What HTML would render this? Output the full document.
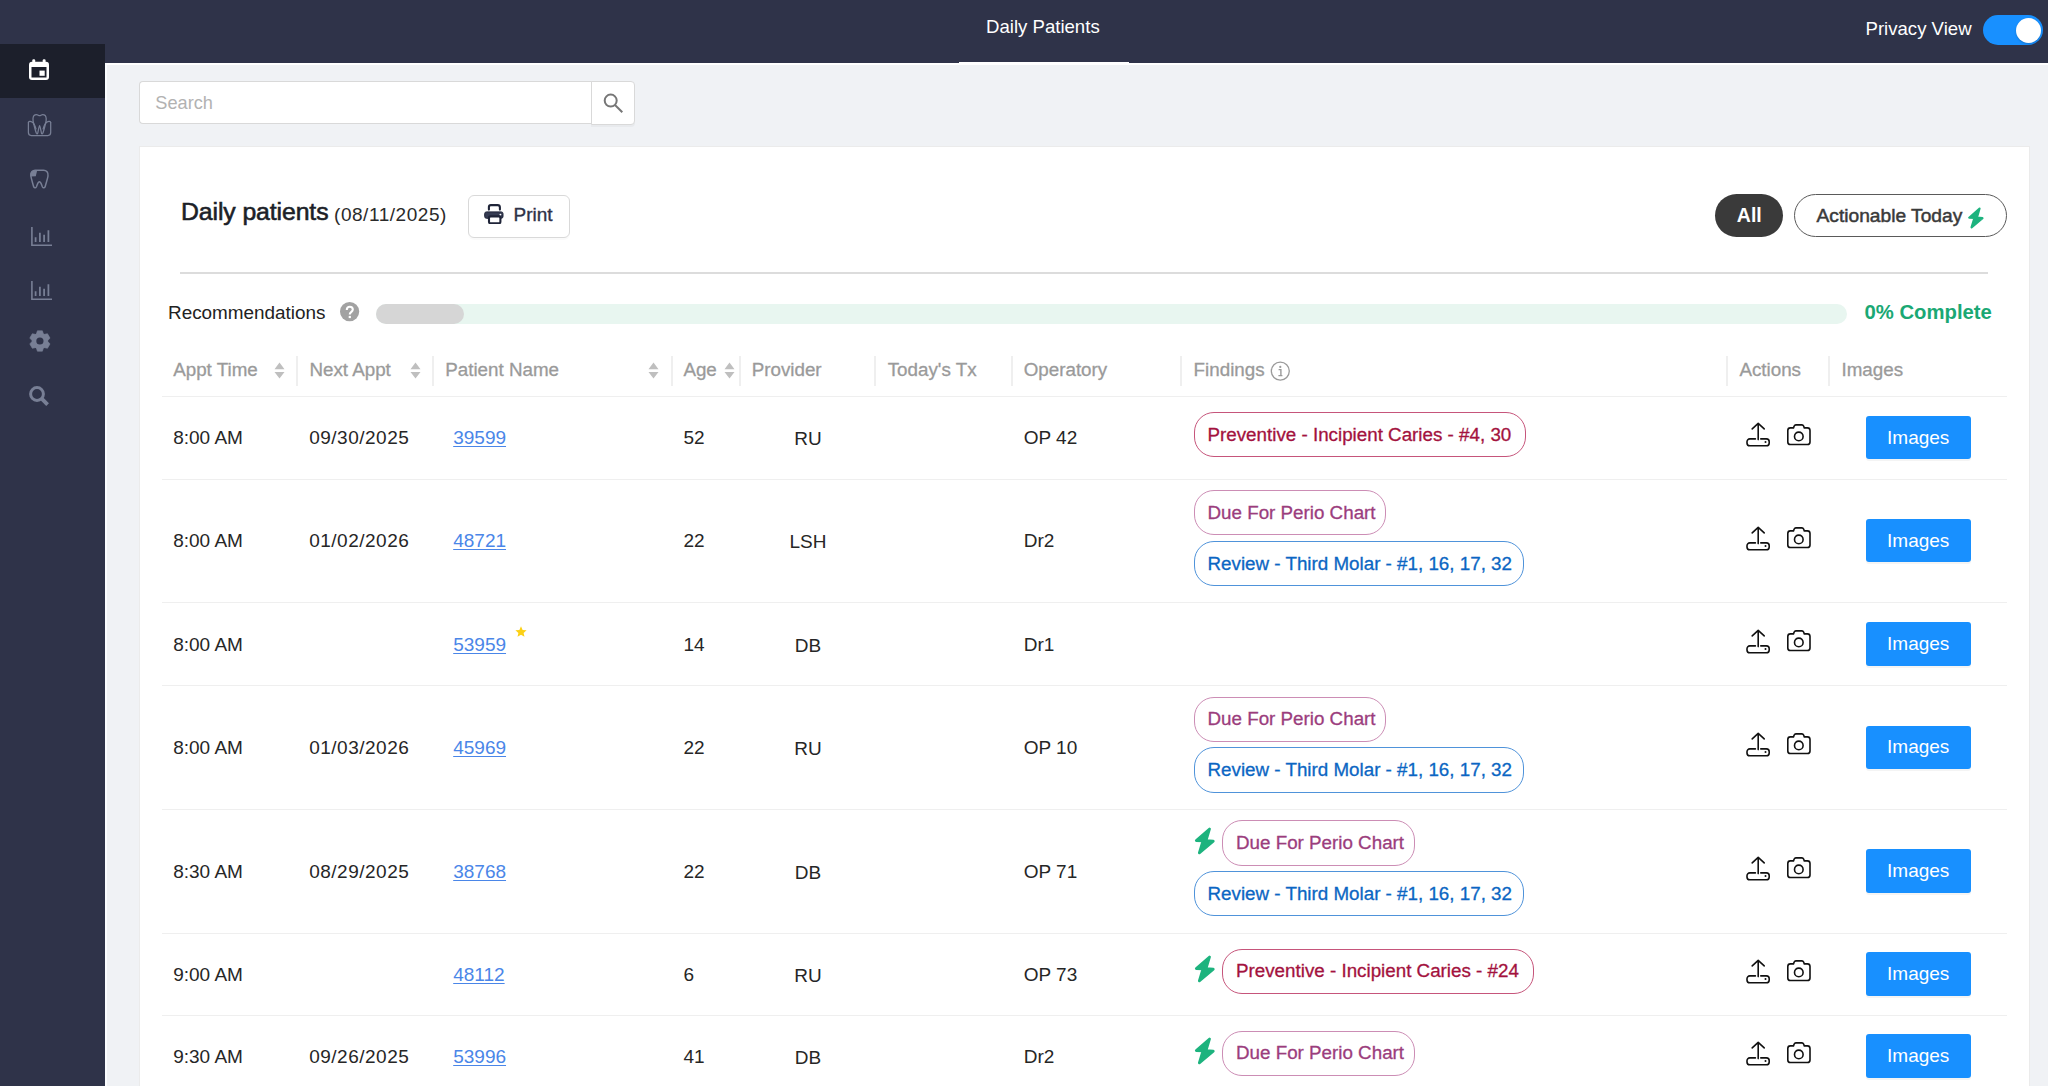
<!DOCTYPE html><html><head><meta charset="utf-8"><style>
html,body{margin:0;padding:0;}
body{width:2048px;height:1086px;overflow:hidden;position:relative;background:#f0f2f5;font-family:"Liberation Sans", sans-serif;}
.a{position:absolute;}
.t{position:absolute;white-space:nowrap;line-height:1;}
.m{-webkit-text-stroke:0.35px currentColor;}
</style></head><body>
<div class="a" style="left:0px;top:0px;width:2048px;height:63px;background:#2f3349"></div>
<div class="a" style="left:0px;top:63px;width:105px;height:1023px;background:#2f3349"></div>
<div class="a" style="left:105px;top:63px;width:1943px;height:1.5px;background:#fff"></div>
<div class="a" style="left:105px;top:63px;width:2px;height:1023px;background:#fbfdff"></div>
<div class="a" style="left:0px;top:44px;width:105px;height:54px;background:#1c1f2b"></div>
<div class="a" style="left:958.5px;top:62px;width:170px;height:3px;background:#fff"></div>
<div class="t " style="left:986.0px;top:18.46px;font-size:18.6px;color:#fff;font-weight:400;">Daily Patients</div>
<div class="t " style="left:1865.5px;top:19.86px;font-size:18.6px;color:#fff;font-weight:400;">Privacy View</div>
<div class="a" style="left:1983px;top:15px;width:60px;height:30px;border-radius:15px;background:#1890ff"></div>
<div class="a" style="left:2015.5px;top:17.8px;width:25px;height:25px;border-radius:50%;background:#fff;box-shadow:0 1px 2px rgba(0,0,0,0.2)"></div>
<svg class="a" style="left:29px;top:59px" width="20" height="21" viewBox="0 0 20 21"><rect x="0" y="2.8" width="20" height="18.2" rx="3" fill="#fff"/>
<rect x="2.5" y="8" width="15" height="10.5" fill="#1c1f2b"/>
<rect x="10.5" y="11.6" width="5.2" height="5.2" fill="#fff"/>
<rect x="3.3" y="0.3" width="2.9" height="4" rx="1.2" fill="#fff"/>
<rect x="13.7" y="0.3" width="2.9" height="4" rx="1.2" fill="#fff"/></svg>
<svg class="a" style="left:27px;top:113px" width="25" height="24" viewBox="27 113 25 24"><g fill="none" stroke="#787f95" stroke-width="1.25" stroke-linejoin="round" stroke-linecap="round">
<path d="M33.8 124 C33 122 32.9 120.5 33 118.5 C33.2 116 34.8 114.7 36.5 114.7 C37.8 114.7 38.6 115.7 39.6 115.7 C40.6 115.7 41.4 114.7 42.7 114.7 C44.4 114.7 46 116 46.2 118.5 C46.3 120.5 46.2 122 45.4 124"/>
<path d="M33.8 124 C34.5 127 35.5 131 36.4 133.3 C36.8 134 37.4 134 37.7 133.3 C38.3 131 38.8 126.5 39.6 125.6 C40.4 126.5 40.9 131 41.5 133.3 C41.8 134 42.4 134 42.8 133.3 C43.7 131 44.7 127 45.4 124"/>
<path d="M28.4 122.6 C28.6 121.2 30.4 120.8 32 121.9 C34 123.3 35.3 126 36 129 M50.7 122.6 C50.5 121.2 48.7 120.8 47.1 121.9 C45.1 123.3 43.8 126 43.1 129"/>
<path d="M28.4 122.6 V132.6 C28.4 134.3 29.6 135.5 31.3 135.5 H47.8 C49.5 135.5 50.7 134.3 50.7 132.6 V122.6"/>
</g></svg>
<svg class="a" style="left:29px;top:169px" width="21" height="21" viewBox="0 0 21 21"><g fill="none" stroke="#787f95" stroke-width="1.5" stroke-linejoin="round">
<path d="M1.8 6.5 C1.3 3 3.8 1 6.5 1.2 L14.5 1.2 C17.5 1.2 19.5 3.5 19 7 C18.6 10 17.2 13.5 16.2 17.5 C15.8 19 14.2 19.3 13.5 18 C12.5 16 12 12.8 10.4 12.8 C8.8 12.8 8.3 16 7.3 18 C6.6 19.3 5 19 4.6 17.5 C3.6 13.5 2.2 10 1.8 6.5 Z"/>
</g><path d="M1.5 7.5 C1 3.5 3.5 1 6.5 1 L8.2 1.3 L6.8 7.3 Z" fill="#787f95"/></svg>
<svg class="a" style="left:30.5px;top:227px" width="22" height="20" viewBox="0 0 22 20"><g stroke="#787f95" fill="none"><path d="M0.9 0 V18.3 H21" stroke-width="1.6"/>
<path d="M4.6 10.2 V15.0 M8.9 5.7 V15.0 M13.1 7.7 V15.0 M17.4 3.2 V15.0" stroke-width="1.75"/></g></svg>
<svg class="a" style="left:30.5px;top:281px" width="22" height="20" viewBox="0 0 22 20"><g stroke="#787f95" fill="none"><path d="M0.9 0 V18.3 H21" stroke-width="1.6"/>
<path d="M4.6 10.2 V15.0 M8.9 5.7 V15.0 M13.1 7.7 V15.0 M17.4 3.2 V15.0" stroke-width="1.75"/></g></svg>
<svg class="a" style="left:28.7px;top:330.2px" width="22" height="22" viewBox="0 0 22 22"><g fill="#787f95"><circle cx="10.9" cy="11" r="8.0"/><path d="M8.4 0.8 H13.4 L14.7 4.8 H7.1 Z" transform="rotate(0 10.9 11)" stroke="#787f95" stroke-width="0.6" stroke-linejoin="round"/><path d="M8.4 0.8 H13.4 L14.7 4.8 H7.1 Z" transform="rotate(60 10.9 11)" stroke="#787f95" stroke-width="0.6" stroke-linejoin="round"/><path d="M8.4 0.8 H13.4 L14.7 4.8 H7.1 Z" transform="rotate(120 10.9 11)" stroke="#787f95" stroke-width="0.6" stroke-linejoin="round"/><path d="M8.4 0.8 H13.4 L14.7 4.8 H7.1 Z" transform="rotate(180 10.9 11)" stroke="#787f95" stroke-width="0.6" stroke-linejoin="round"/><path d="M8.4 0.8 H13.4 L14.7 4.8 H7.1 Z" transform="rotate(240 10.9 11)" stroke="#787f95" stroke-width="0.6" stroke-linejoin="round"/><path d="M8.4 0.8 H13.4 L14.7 4.8 H7.1 Z" transform="rotate(300 10.9 11)" stroke="#787f95" stroke-width="0.6" stroke-linejoin="round"/></g><circle cx="10.9" cy="11" r="3.6" fill="#2f3349"/></svg>
<svg class="a" style="left:28px;top:385px" width="22" height="22" viewBox="0 0 22 22"><g stroke="#787f95" fill="none" stroke-width="3"><circle cx="9" cy="9" r="6.4"/><path d="M13.2 13.2 L19.6 19.6" stroke-width="3.8"/></g></svg>
<div class="a" style="left:139px;top:81px;width:453px;height:43px;box-sizing:border-box;border:1px solid #d9d9d9;border-right:none;border-radius:4px 0 0 4px;background:#fff"></div>
<div class="t " style="left:155.3px;top:94.19px;font-size:18.2px;color:#b2b2b2;font-weight:400;">Search</div>
<div class="a" style="left:591px;top:81px;width:44px;height:44px;box-sizing:border-box;border:1px solid #d9d9d9;border-radius:0 4px 4px 0;background:#fff;box-shadow:0 2px 0 rgba(0,0,0,0.03)"></div>
<svg class="a" style="left:601px;top:91px" width="24" height="24" viewBox="0 0 24 24"><g stroke="#767676" fill="none" stroke-width="2"><circle cx="9.7" cy="9.6" r="6"/><path d="M14 14 L21.3 21.3"/></g></svg>
<div class="a" style="left:139px;top:146px;width:1891px;height:950px;background:#fff;box-sizing:border-box;border:1px solid #ebebeb"></div>
<div class="t m" style="left:181.0px;top:200.41px;font-size:24.8px;color:#1c1f28;font-weight:400;letter-spacing:-0.1px;-webkit-text-stroke:0.6px #1c1f28">Daily patients</div>
<div class="t " style="left:334.0px;top:204.92px;font-size:19px;color:#2a2a2a;font-weight:400;letter-spacing:0.55px">(08/11/2025)</div>
<div class="a" style="left:468px;top:194.5px;width:101.5px;height:43px;box-sizing:border-box;border:1px solid #d9d9d9;border-radius:6px;background:#fff;box-shadow:0 2px 0 rgba(0,0,0,0.02)"></div>
<svg class="a" style="left:483px;top:204px" width="21" height="20" viewBox="0 0 21 20"><path d="M5.9 5.6 V3.1 C5.9 2.0 6.8 1.1 7.9 1.1 H14.6 C15.9 1.1 16.9 2.1 16.9 3.4 V5.6" fill="none" stroke="#1f2438" stroke-width="2.1" stroke-linecap="round"/>
<rect x="1.7" y="7.9" width="18.3" height="6.4" rx="1.8" fill="#353b52" stroke="#1f2438" stroke-width="1"/>
<circle cx="17.4" cy="10.6" r="0.95" fill="#fff"/>
<rect x="6" y="12.4" width="11.4" height="6.9" rx="1.6" fill="#fff" stroke="#1f2438" stroke-width="2.1"/></svg>
<div class="t m" style="left:513.5px;top:205.32px;font-size:19px;color:#2e3248;font-weight:400;">Print</div>
<div class="a" style="left:1715.3px;top:194.4px;width:68px;height:43px;border-radius:22px;background:#3a3a3a"></div>
<div class="t " style="left:1449.3px;width:600px;text-align:center;top:205.99px;font-size:19.5px;color:#fff;font-weight:700;">All</div>
<div class="a" style="left:1794.3px;top:194.4px;width:212.4px;height:43px;box-sizing:border-box;border-radius:22px;border:1px solid #5a5a5a;background:#fff"></div>
<div class="t m" style="left:1816.5px;top:206.25px;font-size:19.2px;color:#3a3a3a;font-weight:400;-webkit-text-stroke:0.5px #3a3a3a">Actionable Today</div>
<svg class="a" style="left:1966.5px;top:206.5px" width="18" height="22" viewBox="0 0 21 27"><path d="M14.9 1.9 L2.1 13.1 L8.5 13.5 L5.0 25.0 L18.5 13.6 L11.6 13.0 Z" fill="#1db37e" stroke="#1db37e" stroke-width="2.6" stroke-linejoin="round"/></svg>
<div class="a" style="left:180px;top:272px;width:1808px;height:2px;background:#dcdcdc"></div>
<div class="t " style="left:168.0px;top:303.90px;font-size:18.9px;color:#222;font-weight:400;">Recommendations</div>
<svg class="a" style="left:340px;top:302px" width="20" height="20" viewBox="0 0 20 20"><circle cx="9.6" cy="9.6" r="9.6" fill="#a2a2a2"/><path d="M6.8 7.9 C6.8 5.9 8.1 4.8 9.8 4.8 C11.6 4.8 12.8 6.0 12.8 7.6 C12.8 9.2 11.5 9.8 10.6 10.6 C10.0 11.1 9.8 11.6 9.8 12.6" fill="none" stroke="#fff" stroke-width="2.1"/><rect x="8.7" y="13.9" width="2.2" height="2.2" fill="#fff"/></svg>
<div class="a" style="left:375.8px;top:304px;width:1471px;height:20px;border-radius:10px;background:#e8f6f0"></div>
<div class="a" style="left:375.8px;top:304px;width:88px;height:20px;border-radius:10px;background:#d6d6d6"></div>
<div class="t " style="left:1864.5px;top:301.62px;font-size:20.3px;color:#1aa874;font-weight:700;">0% Complete</div>
<div class="t m" style="left:173.2px;top:360.59px;font-size:18.8px;color:#9a9a9a;font-weight:400;-webkit-text-stroke:0.3px #9a9a9a">Appt Time</div>
<div class="t m" style="left:309.4px;top:360.59px;font-size:18.8px;color:#9a9a9a;font-weight:400;-webkit-text-stroke:0.3px #9a9a9a">Next Appt</div>
<div class="t m" style="left:445.2px;top:360.59px;font-size:18.8px;color:#9a9a9a;font-weight:400;-webkit-text-stroke:0.3px #9a9a9a">Patient Name</div>
<div class="t m" style="left:683.4px;top:360.59px;font-size:18.8px;color:#9a9a9a;font-weight:400;-webkit-text-stroke:0.3px #9a9a9a">Age</div>
<div class="t m" style="left:751.7px;top:360.59px;font-size:18.8px;color:#9a9a9a;font-weight:400;-webkit-text-stroke:0.3px #9a9a9a">Provider</div>
<div class="t m" style="left:887.7px;top:360.59px;font-size:18.8px;color:#9a9a9a;font-weight:400;-webkit-text-stroke:0.3px #9a9a9a">Today's Tx</div>
<div class="t m" style="left:1023.7px;top:360.59px;font-size:18.8px;color:#9a9a9a;font-weight:400;-webkit-text-stroke:0.3px #9a9a9a">Operatory</div>
<div class="t m" style="left:1193.6px;top:360.59px;font-size:18.8px;color:#9a9a9a;font-weight:400;-webkit-text-stroke:0.3px #9a9a9a">Findings</div>
<div class="t m" style="left:1739.4px;top:360.59px;font-size:18.8px;color:#9a9a9a;font-weight:400;-webkit-text-stroke:0.3px #9a9a9a">Actions</div>
<div class="t m" style="left:1841.5px;top:360.59px;font-size:18.8px;color:#9a9a9a;font-weight:400;-webkit-text-stroke:0.3px #9a9a9a">Images</div>
<svg class="a" style="left:273.5px;top:362px" width="11" height="17" viewBox="0 0 11 17"><path d="M5.5 0.6 L10.5 7.2 L0.5 7.2 Z M0.5 9.9 L10.5 9.9 L5.5 16.6 Z" fill="#bfbfbf"/></svg>
<svg class="a" style="left:410px;top:362px" width="11" height="17" viewBox="0 0 11 17"><path d="M5.5 0.6 L10.5 7.2 L0.5 7.2 Z M0.5 9.9 L10.5 9.9 L5.5 16.6 Z" fill="#bfbfbf"/></svg>
<svg class="a" style="left:648px;top:362px" width="11" height="17" viewBox="0 0 11 17"><path d="M5.5 0.6 L10.5 7.2 L0.5 7.2 Z M0.5 9.9 L10.5 9.9 L5.5 16.6 Z" fill="#bfbfbf"/></svg>
<svg class="a" style="left:724px;top:362px" width="11" height="17" viewBox="0 0 11 17"><path d="M5.5 0.6 L10.5 7.2 L0.5 7.2 Z M0.5 9.9 L10.5 9.9 L5.5 16.6 Z" fill="#bfbfbf"/></svg>
<div class="a" style="left:296.0px;top:355.5px;width:2px;height:30.5px;background:#efefef"></div>
<div class="a" style="left:432.2px;top:355.5px;width:2px;height:30.5px;background:#efefef"></div>
<div class="a" style="left:670.7px;top:355.5px;width:2px;height:30.5px;background:#efefef"></div>
<div class="a" style="left:738.7px;top:355.5px;width:2px;height:30.5px;background:#efefef"></div>
<div class="a" style="left:874.4px;top:355.5px;width:2px;height:30.5px;background:#efefef"></div>
<div class="a" style="left:1010.6px;top:355.5px;width:2px;height:30.5px;background:#efefef"></div>
<div class="a" style="left:1180.4px;top:355.5px;width:2px;height:30.5px;background:#efefef"></div>
<div class="a" style="left:1726.2px;top:355.5px;width:2px;height:30.5px;background:#efefef"></div>
<div class="a" style="left:1828.1px;top:355.5px;width:2px;height:30.5px;background:#efefef"></div>
<svg class="a" style="left:1270px;top:360.5px" width="21" height="21" viewBox="0 0 21 21"><circle cx="10.3" cy="10.1" r="9" fill="none" stroke="#9a9a9a" stroke-width="1.3"/><circle cx="10.3" cy="5.9" r="1.1" fill="#9a9a9a"/><path d="M8.6 8.6 H10.9 V14.4 M8.4 14.6 H12.4" stroke="#9a9a9a" stroke-width="1.4" fill="none"/></svg>
<div class="a" style="left:162px;top:396px;width:1845px;height:1px;background:#efefef"></div>
<div class="t " style="left:173.2px;top:428.02px;font-size:19px;color:#262626;font-weight:400;">8:00 AM</div>
<div class="t " style="left:309.2px;top:428.02px;font-size:19px;color:#262626;font-weight:400;letter-spacing:0.5px">09/30/2025</div>
<div class="t " style="left:453.2px;top:428.02px;font-size:19px;color:#4a86e8;font-weight:400;text-decoration:underline;text-underline-offset:2px;text-decoration-thickness:1.3px">39599</div>
<div class="t " style="left:683.4px;top:428.02px;font-size:19px;color:#262626;font-weight:400;">52</div>
<div class="t " style="left:508.0px;width:600px;text-align:center;top:429.02px;font-size:19px;color:#262626;font-weight:400;">RU</div>
<div class="t " style="left:1023.7px;top:428.02px;font-size:19px;color:#262626;font-weight:400;">OP 42</div>
<div class="a" style="left:1193.5px;top:411.9px;width:332.5px;height:45.4px;box-sizing:border-box;border:1.2px solid #c6557b;border-radius:20px"></div>
<div class="t m" style="left:1207.5px;top:425.59px;font-size:18.8px;color:#a3123e;font-weight:400;-webkit-text-stroke:0.3px #a3123e">Preventive - Incipient Caries - #4, 30</div>
<svg class="a" style="left:1746px;top:422.3px" width="25" height="25" viewBox="0 0 25 25"><g fill="none" stroke="#111" stroke-width="1.6" stroke-linecap="round" stroke-linejoin="round">
<path d="M9.4 16.9 H3.8 C2.2 16.9 1.0 18.1 1.0 19.7 V20.9 C1.0 22.5 2.2 23.7 3.8 23.7 H20.4 C22.0 23.7 23.2 22.5 23.2 20.9 V19.7 C23.2 18.1 22.0 16.9 20.4 16.9 H14.8"/>
<path d="M12.2 1.3 V17.6 M6.2 6.9 L12.2 1.3 L18.2 6.9"/></g><circle cx="19.5" cy="20.1" r="1" fill="#111"/></svg>
<svg class="a" style="left:1787px;top:423.7px" width="24" height="22" viewBox="0 0 24 22"><g fill="none" stroke="#111" stroke-width="1.6" stroke-linejoin="round">
<path d="M0.8 6.5 C0.8 5.0 1.9 3.9 3.4 3.9 H6.5 L7.2 2.0 C7.5 1.3 8.1 0.9 8.9 0.9 H14.9 C15.7 0.9 16.3 1.3 16.6 2.0 L17.3 3.9 H20.4 C21.9 3.9 23.0 5.0 23.0 6.5 V17.9 C23.0 19.4 21.9 20.5 20.4 20.5 H3.4 C1.9 20.5 0.8 19.4 0.8 17.9 Z"/>
<circle cx="11.8" cy="12.4" r="4.3"/></g></svg>
<div class="a" style="left:1865.7px;top:415.7px;width:105px;height:43.4px;border-radius:3px;background:#1890ff;box-shadow:0 2px 0 rgba(0,0,0,0.045)"></div>
<div class="t " style="left:1618.2px;width:600px;text-align:center;top:427.72px;font-size:19px;color:#fff;font-weight:400;">Images</div>
<div class="a" style="left:162px;top:478.5px;width:1845px;height:1px;background:#efefef"></div>
<div class="t " style="left:173.2px;top:531.37px;font-size:19px;color:#262626;font-weight:400;">8:00 AM</div>
<div class="t " style="left:309.2px;top:531.37px;font-size:19px;color:#262626;font-weight:400;letter-spacing:0.5px">01/02/2026</div>
<div class="t " style="left:453.2px;top:531.37px;font-size:19px;color:#4a86e8;font-weight:400;text-decoration:underline;text-underline-offset:2px;text-decoration-thickness:1.3px">48721</div>
<div class="t " style="left:683.4px;top:531.37px;font-size:19px;color:#262626;font-weight:400;">22</div>
<div class="t " style="left:508.0px;width:600px;text-align:center;top:532.37px;font-size:19px;color:#262626;font-weight:400;">LSH</div>
<div class="t " style="left:1023.7px;top:531.37px;font-size:19px;color:#262626;font-weight:400;">Dr2</div>
<div class="a" style="left:1193.5px;top:490.1px;width:192.7px;height:45.4px;box-sizing:border-box;border:1.2px solid #cc8db5;border-radius:20px"></div>
<div class="t m" style="left:1207.5px;top:503.74px;font-size:18.8px;color:#9b3d7d;font-weight:400;-webkit-text-stroke:0.3px #9b3d7d">Due For Perio Chart</div>
<div class="a" style="left:1193.5px;top:541.0px;width:330.2px;height:45.4px;box-sizing:border-box;border:1.2px solid #4f93da;border-radius:20px"></div>
<div class="t m" style="left:1207.5px;top:554.64px;font-size:18.8px;color:#0b66c3;font-weight:400;-webkit-text-stroke:0.3px #0b66c3">Review - Third Molar - #1, 16, 17, 32</div>
<svg class="a" style="left:1746px;top:525.65px" width="25" height="25" viewBox="0 0 25 25"><g fill="none" stroke="#111" stroke-width="1.6" stroke-linecap="round" stroke-linejoin="round">
<path d="M9.4 16.9 H3.8 C2.2 16.9 1.0 18.1 1.0 19.7 V20.9 C1.0 22.5 2.2 23.7 3.8 23.7 H20.4 C22.0 23.7 23.2 22.5 23.2 20.9 V19.7 C23.2 18.1 22.0 16.9 20.4 16.9 H14.8"/>
<path d="M12.2 1.3 V17.6 M6.2 6.9 L12.2 1.3 L18.2 6.9"/></g><circle cx="19.5" cy="20.1" r="1" fill="#111"/></svg>
<svg class="a" style="left:1787px;top:527.0500000000001px" width="24" height="22" viewBox="0 0 24 22"><g fill="none" stroke="#111" stroke-width="1.6" stroke-linejoin="round">
<path d="M0.8 6.5 C0.8 5.0 1.9 3.9 3.4 3.9 H6.5 L7.2 2.0 C7.5 1.3 8.1 0.9 8.9 0.9 H14.9 C15.7 0.9 16.3 1.3 16.6 2.0 L17.3 3.9 H20.4 C21.9 3.9 23.0 5.0 23.0 6.5 V17.9 C23.0 19.4 21.9 20.5 20.4 20.5 H3.4 C1.9 20.5 0.8 19.4 0.8 17.9 Z"/>
<circle cx="11.8" cy="12.4" r="4.3"/></g></svg>
<div class="a" style="left:1865.7px;top:519.1px;width:105px;height:43.4px;border-radius:3px;background:#1890ff;box-shadow:0 2px 0 rgba(0,0,0,0.045)"></div>
<div class="t " style="left:1618.2px;width:600px;text-align:center;top:531.07px;font-size:19px;color:#fff;font-weight:400;">Images</div>
<div class="a" style="left:162px;top:602.2px;width:1845px;height:1px;background:#efefef"></div>
<div class="t " style="left:173.2px;top:634.62px;font-size:19px;color:#262626;font-weight:400;">8:00 AM</div>
<div class="t " style="left:453.2px;top:634.62px;font-size:19px;color:#4a86e8;font-weight:400;text-decoration:underline;text-underline-offset:2px;text-decoration-thickness:1.3px">53959</div>
<svg class="a" style="left:514.5px;top:625.7px" width="12" height="12" viewBox="0 0 12 12"><path d="M6 0.3 L7.6 4 L11.6 4.3 L8.6 6.9 L9.5 10.8 L6 8.7 L2.5 10.8 L3.4 6.9 L0.4 4.3 L4.4 4 Z" fill="#fcd116"/></svg>
<div class="t " style="left:683.4px;top:634.62px;font-size:19px;color:#262626;font-weight:400;">14</div>
<div class="t " style="left:508.0px;width:600px;text-align:center;top:635.62px;font-size:19px;color:#262626;font-weight:400;">DB</div>
<div class="t " style="left:1023.7px;top:634.62px;font-size:19px;color:#262626;font-weight:400;">Dr1</div>
<svg class="a" style="left:1746px;top:628.9px" width="25" height="25" viewBox="0 0 25 25"><g fill="none" stroke="#111" stroke-width="1.6" stroke-linecap="round" stroke-linejoin="round">
<path d="M9.4 16.9 H3.8 C2.2 16.9 1.0 18.1 1.0 19.7 V20.9 C1.0 22.5 2.2 23.7 3.8 23.7 H20.4 C22.0 23.7 23.2 22.5 23.2 20.9 V19.7 C23.2 18.1 22.0 16.9 20.4 16.9 H14.8"/>
<path d="M12.2 1.3 V17.6 M6.2 6.9 L12.2 1.3 L18.2 6.9"/></g><circle cx="19.5" cy="20.1" r="1" fill="#111"/></svg>
<svg class="a" style="left:1787px;top:630.3000000000001px" width="24" height="22" viewBox="0 0 24 22"><g fill="none" stroke="#111" stroke-width="1.6" stroke-linejoin="round">
<path d="M0.8 6.5 C0.8 5.0 1.9 3.9 3.4 3.9 H6.5 L7.2 2.0 C7.5 1.3 8.1 0.9 8.9 0.9 H14.9 C15.7 0.9 16.3 1.3 16.6 2.0 L17.3 3.9 H20.4 C21.9 3.9 23.0 5.0 23.0 6.5 V17.9 C23.0 19.4 21.9 20.5 20.4 20.5 H3.4 C1.9 20.5 0.8 19.4 0.8 17.9 Z"/>
<circle cx="11.8" cy="12.4" r="4.3"/></g></svg>
<div class="a" style="left:1865.7px;top:622.3px;width:105px;height:43.4px;border-radius:3px;background:#1890ff;box-shadow:0 2px 0 rgba(0,0,0,0.045)"></div>
<div class="t " style="left:1618.2px;width:600px;text-align:center;top:634.32px;font-size:19px;color:#fff;font-weight:400;">Images</div>
<div class="a" style="left:162px;top:685.0px;width:1845px;height:1px;background:#efefef"></div>
<div class="t " style="left:173.2px;top:737.77px;font-size:19px;color:#262626;font-weight:400;">8:00 AM</div>
<div class="t " style="left:309.2px;top:737.77px;font-size:19px;color:#262626;font-weight:400;letter-spacing:0.5px">01/03/2026</div>
<div class="t " style="left:453.2px;top:737.77px;font-size:19px;color:#4a86e8;font-weight:400;text-decoration:underline;text-underline-offset:2px;text-decoration-thickness:1.3px">45969</div>
<div class="t " style="left:683.4px;top:737.77px;font-size:19px;color:#262626;font-weight:400;">22</div>
<div class="t " style="left:508.0px;width:600px;text-align:center;top:738.77px;font-size:19px;color:#262626;font-weight:400;">RU</div>
<div class="t " style="left:1023.7px;top:737.77px;font-size:19px;color:#262626;font-weight:400;">OP 10</div>
<div class="a" style="left:1193.5px;top:696.5px;width:192.7px;height:45.4px;box-sizing:border-box;border:1.2px solid #cc8db5;border-radius:20px"></div>
<div class="t m" style="left:1207.5px;top:710.14px;font-size:18.8px;color:#9b3d7d;font-weight:400;-webkit-text-stroke:0.3px #9b3d7d">Due For Perio Chart</div>
<div class="a" style="left:1193.5px;top:747.4px;width:330.2px;height:45.4px;box-sizing:border-box;border:1.2px solid #4f93da;border-radius:20px"></div>
<div class="t m" style="left:1207.5px;top:761.04px;font-size:18.8px;color:#0b66c3;font-weight:400;-webkit-text-stroke:0.3px #0b66c3">Review - Third Molar - #1, 16, 17, 32</div>
<svg class="a" style="left:1746px;top:732.05px" width="25" height="25" viewBox="0 0 25 25"><g fill="none" stroke="#111" stroke-width="1.6" stroke-linecap="round" stroke-linejoin="round">
<path d="M9.4 16.9 H3.8 C2.2 16.9 1.0 18.1 1.0 19.7 V20.9 C1.0 22.5 2.2 23.7 3.8 23.7 H20.4 C22.0 23.7 23.2 22.5 23.2 20.9 V19.7 C23.2 18.1 22.0 16.9 20.4 16.9 H14.8"/>
<path d="M12.2 1.3 V17.6 M6.2 6.9 L12.2 1.3 L18.2 6.9"/></g><circle cx="19.5" cy="20.1" r="1" fill="#111"/></svg>
<svg class="a" style="left:1787px;top:733.45px" width="24" height="22" viewBox="0 0 24 22"><g fill="none" stroke="#111" stroke-width="1.6" stroke-linejoin="round">
<path d="M0.8 6.5 C0.8 5.0 1.9 3.9 3.4 3.9 H6.5 L7.2 2.0 C7.5 1.3 8.1 0.9 8.9 0.9 H14.9 C15.7 0.9 16.3 1.3 16.6 2.0 L17.3 3.9 H20.4 C21.9 3.9 23.0 5.0 23.0 6.5 V17.9 C23.0 19.4 21.9 20.5 20.4 20.5 H3.4 C1.9 20.5 0.8 19.4 0.8 17.9 Z"/>
<circle cx="11.8" cy="12.4" r="4.3"/></g></svg>
<div class="a" style="left:1865.7px;top:725.5px;width:105px;height:43.4px;border-radius:3px;background:#1890ff;box-shadow:0 2px 0 rgba(0,0,0,0.045)"></div>
<div class="t " style="left:1618.2px;width:600px;text-align:center;top:737.47px;font-size:19px;color:#fff;font-weight:400;">Images</div>
<div class="a" style="left:162px;top:808.5px;width:1845px;height:1px;background:#efefef"></div>
<div class="t " style="left:173.2px;top:861.52px;font-size:19px;color:#262626;font-weight:400;">8:30 AM</div>
<div class="t " style="left:309.2px;top:861.52px;font-size:19px;color:#262626;font-weight:400;letter-spacing:0.5px">08/29/2025</div>
<div class="t " style="left:453.2px;top:861.52px;font-size:19px;color:#4a86e8;font-weight:400;text-decoration:underline;text-underline-offset:2px;text-decoration-thickness:1.3px">38768</div>
<div class="t " style="left:683.4px;top:861.52px;font-size:19px;color:#262626;font-weight:400;">22</div>
<div class="t " style="left:508.0px;width:600px;text-align:center;top:862.52px;font-size:19px;color:#262626;font-weight:400;">DB</div>
<div class="t " style="left:1023.7px;top:861.52px;font-size:19px;color:#262626;font-weight:400;">OP 71</div>
<svg class="a" style="left:1194.2px;top:827.0px" width="22" height="28" viewBox="0 0 21 27"><path d="M14.9 1.9 L2.1 13.1 L8.5 13.5 L5.0 25.0 L18.5 13.6 L11.6 13.0 Z" fill="#1db37e" stroke="#1db37e" stroke-width="2.6" stroke-linejoin="round"/></svg>
<div class="a" style="left:1222px;top:820.2px;width:192.7px;height:45.4px;box-sizing:border-box;border:1.2px solid #cc8db5;border-radius:20px"></div>
<div class="t m" style="left:1236.0px;top:833.89px;font-size:18.8px;color:#9b3d7d;font-weight:400;-webkit-text-stroke:0.3px #9b3d7d">Due For Perio Chart</div>
<div class="a" style="left:1193.5px;top:871.1px;width:330.2px;height:45.4px;box-sizing:border-box;border:1.2px solid #4f93da;border-radius:20px"></div>
<div class="t m" style="left:1207.5px;top:884.79px;font-size:18.8px;color:#0b66c3;font-weight:400;-webkit-text-stroke:0.3px #0b66c3">Review - Third Molar - #1, 16, 17, 32</div>
<svg class="a" style="left:1746px;top:855.8px" width="25" height="25" viewBox="0 0 25 25"><g fill="none" stroke="#111" stroke-width="1.6" stroke-linecap="round" stroke-linejoin="round">
<path d="M9.4 16.9 H3.8 C2.2 16.9 1.0 18.1 1.0 19.7 V20.9 C1.0 22.5 2.2 23.7 3.8 23.7 H20.4 C22.0 23.7 23.2 22.5 23.2 20.9 V19.7 C23.2 18.1 22.0 16.9 20.4 16.9 H14.8"/>
<path d="M12.2 1.3 V17.6 M6.2 6.9 L12.2 1.3 L18.2 6.9"/></g><circle cx="19.5" cy="20.1" r="1" fill="#111"/></svg>
<svg class="a" style="left:1787px;top:857.2px" width="24" height="22" viewBox="0 0 24 22"><g fill="none" stroke="#111" stroke-width="1.6" stroke-linejoin="round">
<path d="M0.8 6.5 C0.8 5.0 1.9 3.9 3.4 3.9 H6.5 L7.2 2.0 C7.5 1.3 8.1 0.9 8.9 0.9 H14.9 C15.7 0.9 16.3 1.3 16.6 2.0 L17.3 3.9 H20.4 C21.9 3.9 23.0 5.0 23.0 6.5 V17.9 C23.0 19.4 21.9 20.5 20.4 20.5 H3.4 C1.9 20.5 0.8 19.4 0.8 17.9 Z"/>
<circle cx="11.8" cy="12.4" r="4.3"/></g></svg>
<div class="a" style="left:1865.7px;top:849.2px;width:105px;height:43.4px;border-radius:3px;background:#1890ff;box-shadow:0 2px 0 rgba(0,0,0,0.045)"></div>
<div class="t " style="left:1618.2px;width:600px;text-align:center;top:861.22px;font-size:19px;color:#fff;font-weight:400;">Images</div>
<div class="a" style="left:162px;top:932.5px;width:1845px;height:1px;background:#efefef"></div>
<div class="t " style="left:173.2px;top:964.67px;font-size:19px;color:#262626;font-weight:400;">9:00 AM</div>
<div class="t " style="left:453.2px;top:964.67px;font-size:19px;color:#4a86e8;font-weight:400;text-decoration:underline;text-underline-offset:2px;text-decoration-thickness:1.3px">48112</div>
<div class="t " style="left:683.4px;top:964.67px;font-size:19px;color:#262626;font-weight:400;">6</div>
<div class="t " style="left:508.0px;width:600px;text-align:center;top:965.67px;font-size:19px;color:#262626;font-weight:400;">RU</div>
<div class="t " style="left:1023.7px;top:964.67px;font-size:19px;color:#262626;font-weight:400;">OP 73</div>
<svg class="a" style="left:1194.2px;top:955.3499999999999px" width="22" height="28" viewBox="0 0 21 27"><path d="M14.9 1.9 L2.1 13.1 L8.5 13.5 L5.0 25.0 L18.5 13.6 L11.6 13.0 Z" fill="#1db37e" stroke="#1db37e" stroke-width="2.6" stroke-linejoin="round"/></svg>
<div class="a" style="left:1222px;top:948.5px;width:312.2px;height:45.4px;box-sizing:border-box;border:1.2px solid #c6557b;border-radius:20px"></div>
<div class="t m" style="left:1236.0px;top:962.24px;font-size:18.8px;color:#a3123e;font-weight:400;-webkit-text-stroke:0.3px #a3123e">Preventive - Incipient Caries - #24</div>
<svg class="a" style="left:1746px;top:958.9499999999999px" width="25" height="25" viewBox="0 0 25 25"><g fill="none" stroke="#111" stroke-width="1.6" stroke-linecap="round" stroke-linejoin="round">
<path d="M9.4 16.9 H3.8 C2.2 16.9 1.0 18.1 1.0 19.7 V20.9 C1.0 22.5 2.2 23.7 3.8 23.7 H20.4 C22.0 23.7 23.2 22.5 23.2 20.9 V19.7 C23.2 18.1 22.0 16.9 20.4 16.9 H14.8"/>
<path d="M12.2 1.3 V17.6 M6.2 6.9 L12.2 1.3 L18.2 6.9"/></g><circle cx="19.5" cy="20.1" r="1" fill="#111"/></svg>
<svg class="a" style="left:1787px;top:960.35px" width="24" height="22" viewBox="0 0 24 22"><g fill="none" stroke="#111" stroke-width="1.6" stroke-linejoin="round">
<path d="M0.8 6.5 C0.8 5.0 1.9 3.9 3.4 3.9 H6.5 L7.2 2.0 C7.5 1.3 8.1 0.9 8.9 0.9 H14.9 C15.7 0.9 16.3 1.3 16.6 2.0 L17.3 3.9 H20.4 C21.9 3.9 23.0 5.0 23.0 6.5 V17.9 C23.0 19.4 21.9 20.5 20.4 20.5 H3.4 C1.9 20.5 0.8 19.4 0.8 17.9 Z"/>
<circle cx="11.8" cy="12.4" r="4.3"/></g></svg>
<div class="a" style="left:1865.7px;top:952.4px;width:105px;height:43.4px;border-radius:3px;background:#1890ff;box-shadow:0 2px 0 rgba(0,0,0,0.045)"></div>
<div class="t " style="left:1618.2px;width:600px;text-align:center;top:964.37px;font-size:19px;color:#fff;font-weight:400;">Images</div>
<div class="a" style="left:162px;top:1014.8px;width:1845px;height:1px;background:#efefef"></div>
<div class="t " style="left:173.2px;top:1046.67px;font-size:19px;color:#262626;font-weight:400;">9:30 AM</div>
<div class="t " style="left:309.2px;top:1046.67px;font-size:19px;color:#262626;font-weight:400;letter-spacing:0.5px">09/26/2025</div>
<div class="t " style="left:453.2px;top:1046.67px;font-size:19px;color:#4a86e8;font-weight:400;text-decoration:underline;text-underline-offset:2px;text-decoration-thickness:1.3px">53996</div>
<div class="t " style="left:683.4px;top:1046.67px;font-size:19px;color:#262626;font-weight:400;">41</div>
<div class="t " style="left:508.0px;width:600px;text-align:center;top:1047.67px;font-size:19px;color:#262626;font-weight:400;">DB</div>
<div class="t " style="left:1023.7px;top:1046.67px;font-size:19px;color:#262626;font-weight:400;">Dr2</div>
<svg class="a" style="left:1194.2px;top:1037.3500000000001px" width="22" height="28" viewBox="0 0 21 27"><path d="M14.9 1.9 L2.1 13.1 L8.5 13.5 L5.0 25.0 L18.5 13.6 L11.6 13.0 Z" fill="#1db37e" stroke="#1db37e" stroke-width="2.6" stroke-linejoin="round"/></svg>
<div class="a" style="left:1222px;top:1030.6px;width:192.7px;height:45.4px;box-sizing:border-box;border:1.2px solid #cc8db5;border-radius:20px"></div>
<div class="t m" style="left:1236.0px;top:1044.24px;font-size:18.8px;color:#9b3d7d;font-weight:400;-webkit-text-stroke:0.3px #9b3d7d">Due For Perio Chart</div>
<svg class="a" style="left:1746px;top:1040.95px" width="25" height="25" viewBox="0 0 25 25"><g fill="none" stroke="#111" stroke-width="1.6" stroke-linecap="round" stroke-linejoin="round">
<path d="M9.4 16.9 H3.8 C2.2 16.9 1.0 18.1 1.0 19.7 V20.9 C1.0 22.5 2.2 23.7 3.8 23.7 H20.4 C22.0 23.7 23.2 22.5 23.2 20.9 V19.7 C23.2 18.1 22.0 16.9 20.4 16.9 H14.8"/>
<path d="M12.2 1.3 V17.6 M6.2 6.9 L12.2 1.3 L18.2 6.9"/></g><circle cx="19.5" cy="20.1" r="1" fill="#111"/></svg>
<svg class="a" style="left:1787px;top:1042.3500000000001px" width="24" height="22" viewBox="0 0 24 22"><g fill="none" stroke="#111" stroke-width="1.6" stroke-linejoin="round">
<path d="M0.8 6.5 C0.8 5.0 1.9 3.9 3.4 3.9 H6.5 L7.2 2.0 C7.5 1.3 8.1 0.9 8.9 0.9 H14.9 C15.7 0.9 16.3 1.3 16.6 2.0 L17.3 3.9 H20.4 C21.9 3.9 23.0 5.0 23.0 6.5 V17.9 C23.0 19.4 21.9 20.5 20.4 20.5 H3.4 C1.9 20.5 0.8 19.4 0.8 17.9 Z"/>
<circle cx="11.8" cy="12.4" r="4.3"/></g></svg>
<div class="a" style="left:1865.7px;top:1034.4px;width:105px;height:43.4px;border-radius:3px;background:#1890ff;box-shadow:0 2px 0 rgba(0,0,0,0.045)"></div>
<div class="t " style="left:1618.2px;width:600px;text-align:center;top:1046.37px;font-size:19px;color:#fff;font-weight:400;">Images</div>
</body></html>
